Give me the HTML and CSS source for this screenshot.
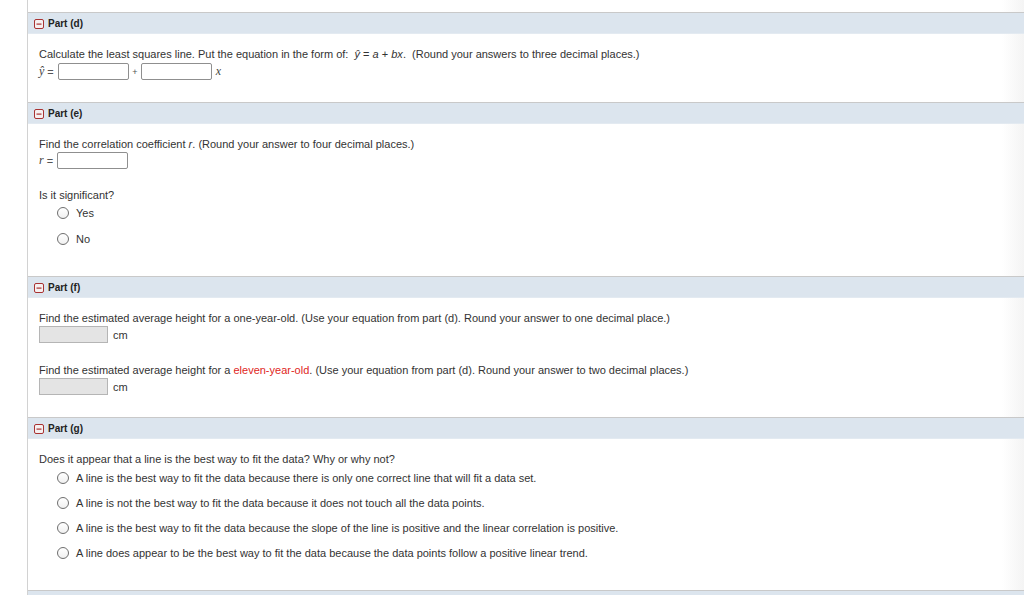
FILE: index.html
```html
<!DOCTYPE html>
<html>
<head>
<meta charset="utf-8">
<link rel="stylesheet" href="styles.css">
</head>
<body>
<div class="page">
  <section class="part">
    <div class="part-head">
      <svg class="tog" width="10" height="10" viewBox="0 0 10 10"><rect x="0.5" y="0.5" width="9" height="9" rx="1.5" fill="#f6f0f0" stroke="#a83232"/><rect x="2.5" y="4.5" width="5" height="1.2" fill="#a83232"/></svg>
      <span>Part (d)</span>
    </div>
    <div class="part-body pb-d">
      <p class="line">Calculate the least squares line. Put the equation in the form of:&nbsp; <i>ŷ</i> = <i>a</i> + <i>bx</i>.&nbsp; (Round your answers to three decimal places.)</p>
      <div class="eq eq-d">
        <i class="sym">ŷ</i><span class="op">=</span><span class="box"></span><span class="plus">+</span><span class="box"></span><i class="xv">x</i>
      </div>
    </div>
  </section>

  <section class="part">
    <div class="part-head">
      <svg class="tog" width="10" height="10" viewBox="0 0 10 10"><rect x="0.5" y="0.5" width="9" height="9" rx="1.5" fill="#f6f0f0" stroke="#a83232"/><rect x="2.5" y="4.5" width="5" height="1.2" fill="#a83232"/></svg>
      <span>Part (e)</span>
    </div>
    <div class="part-body pb-e">
      <p class="line">Find the correlation coefficient <i>r</i>. (Round your answer to four decimal places.)</p>
      <div class="eq eq-e">
        <i class="sym">r</i><span class="op">=</span><span class="box"></span>
      </div>
      <p class="line q-sig">Is it significant?</p>
      <div class="opts opts-e">
        <div class="opt"><span class="radio"></span><span>Yes</span></div>
        <div class="opt"><span class="radio"></span><span>No</span></div>
      </div>
    </div>
  </section>

  <section class="part">
    <div class="part-head">
      <svg class="tog" width="10" height="10" viewBox="0 0 10 10"><rect x="0.5" y="0.5" width="9" height="9" rx="1.5" fill="#f6f0f0" stroke="#a83232"/><rect x="2.5" y="4.5" width="5" height="1.2" fill="#a83232"/></svg>
      <span>Part (f)</span>
    </div>
    <div class="part-body pb-f">
      <p class="line">Find the estimated average height for a one-year-old. (Use your equation from part (d). Round your answer to one decimal place.)</p>
      <div class="eq eq-f"><span class="gbox"></span><span class="unit">cm</span></div>
      <p class="line q-f2">Find the estimated average height for a <span class="red">eleven-year-old</span>. (Use your equation from part (d). Round your answer to two decimal places.)</p>
      <div class="eq eq-f"><span class="gbox"></span><span class="unit">cm</span></div>
    </div>
  </section>

  <section class="part">
    <div class="part-head">
      <svg class="tog" width="10" height="10" viewBox="0 0 10 10"><rect x="0.5" y="0.5" width="9" height="9" rx="1.5" fill="#f6f0f0" stroke="#a83232"/><rect x="2.5" y="4.5" width="5" height="1.2" fill="#a83232"/></svg>
      <span>Part (g)</span>
    </div>
    <div class="part-body pb-g">
      <p class="line">Does it appear that a line is the best way to fit the data? Why or why not?</p>
      <div class="opts opts-g">
        <div class="opt"><span class="radio"></span><span>A line is the best way to fit the data because there is only one correct line that will fit a data set.</span></div>
        <div class="opt"><span class="radio"></span><span>A line is not the best way to fit the data because it does not touch all the data points.</span></div>
        <div class="opt"><span class="radio"></span><span>A line is the best way to fit the data because the slope of the line is positive and the linear correlation is positive.</span></div>
        <div class="opt"><span class="radio"></span><span>A line does appear to be the best way to fit the data because the data points follow a positive linear trend.</span></div>
      </div>
    </div>
  </section>

  <section class="part">
    <div class="part-head part-head-tail"></div>
  </section>
</div>
</body>
</html>
```

FILE: styles.css
```css
html, body {
  margin: 0;
  padding: 0;
  background: #ffffff;
}
body {
  font-family: "Liberation Sans", Arial, sans-serif;
  font-size: 11px;
  color: #333333;
  overflow: hidden;
}
.page {
  margin-left: 27px;
  border-left: 1px solid #d2d2d2;
  padding-top: 12px;
  min-height: 100vh;
  box-sizing: border-box;
  background: linear-gradient(to right, #ffffff 0, #ffffff calc(100% - 22px), #f4f4f4 100%);
}
.part-head {
  height: 21px;
  border-top: 1px solid #c9c9c9;
  background: #dce5ee;
  box-shadow: inset 0 -1px 0 #e3eaf1;
  display: flex;
  align-items: center;
  padding-left: 6px;
  gap: 4px;
  font-weight: bold;
  font-size: 10px;
  color: #222222;
}
.part-head-tail {
  height: 10px;
}
.tog {
  display: block;
  flex: none;
}
.part-body {
  padding: 13px 11px 0 11px;
}
.pb-d { padding-bottom: 22px; }
.pb-e { padding-bottom: 30px; }
.pb-f { padding-bottom: 22px; }
.pb-g { padding-bottom: 30px; }
.line {
  margin: 0;
  line-height: 14px;
  white-space: nowrap;
}
.eq {
  display: flex;
  align-items: center;
  height: 17px;
}
.eq-d { margin-top: 2px; }
.eq-e { margin-top: 1px; }
.eq-f { margin-top: 1px; }
.sym {
  font-family: "Liberation Serif", "Times New Roman", serif;
  font-size: 12px;
  color: #444;
}
.op {
  margin-left: 3px;
  margin-right: 4px;
  color: #555;
}
.box {
  width: 69px;
  height: 15px;
  border: 1px solid #8f8f8f;
  border-radius: 2px;
  background: #fff;
  display: block;
}
.plus {
  width: 12px;
  text-align: center;
  font-size: 9px;
  color: #555;
}
.xv {
  font-family: "Liberation Serif", "Times New Roman", serif;
  font-size: 12px;
  margin-left: 4px;
  color: #444;
}
.gbox {
  width: 67px;
  height: 15px;
  border: 1px solid #b5b5b5;
  background: #e4e4e4;
  display: block;
}
.unit {
  margin-left: 5px;
}
.q-sig { margin-top: 19px; }
.q-f2 { margin-top: 20px; }
.red { color: #e0261c; }
.opts {
  padding-left: 18px;
}
.opts-e { margin-top: 4px; }
.opts-g { margin-top: 5px; }
.opt {
  display: flex;
  align-items: center;
  gap: 7px;
  line-height: 14px;
  white-space: nowrap;
}
.opt + .opt { margin-top: 11px; }
.opts-e .opt + .opt { margin-top: 12px; }
.radio {
  width: 10px;
  height: 10px;
  border: 1px solid #6e6e6e;
  border-radius: 50%;
  background: linear-gradient(#ffffff, #f0f0f0);
  flex: none;
}
```
